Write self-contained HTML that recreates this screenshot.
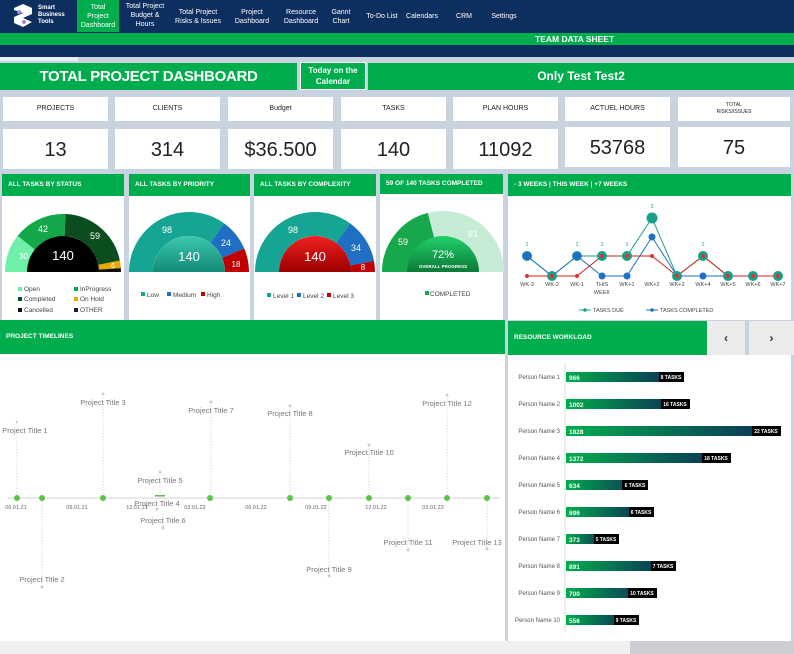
<!DOCTYPE html>
<html><head><meta charset="utf-8">
<style>
*{margin:0;padding:0;box-sizing:border-box}
body{width:794px;height:654px;overflow:hidden;background:#c9d3df;font-family:"Liberation Sans",sans-serif;position:relative}
.a{position:absolute}
.nav{left:0;top:0;width:794px;height:33px;background:#0d2f5f}
.ni{position:absolute;top:3px;color:#fff;font-size:7px;line-height:9px;text-align:center}
.g{background:#00ad4d}
.hdr{color:#fff;font-size:6.5px;font-weight:bold;padding-left:6px;line-height:22px}
.kl{background:#fff;top:97px;height:24px;font-size:7px;text-align:center;line-height:24px;color:#222}
.kv{background:#fff;top:129px;height:40px;font-size:20px;text-align:center;line-height:42px;color:#222}
.wb{background:#fff}
</style></head><body>
<div class="a nav"></div>
<svg class="a" style="left:12px;top:4px" width="22" height="24" viewBox="0 0 22 24"><path d="M2 4 L11 0 L20 4 L20 10 L11 14 L20 18 L11 23 L2 19 L2 13 L11 9 L2 6Z" fill="#fff"/><circle cx="7" cy="8" r="2" fill="#a78bc8"/><circle cx="12" cy="18" r="2" fill="#a78bc8"/></svg>
<div class="ni" style="left:38px;top:5px;text-align:left;font-weight:bold;font-size:6px;line-height:7px">Smart<br>Business<br>Tools</div>
<div class="a g" style="left:77px;top:0;width:42px;height:32px"></div>
<div class="ni" style="left:77px;width:42px">Total<br>Project<br>Dashboard</div>
<div class="ni" style="left:122px;top:2px;width:46px">Total Project<br>Budget &amp;<br>Hours</div>
<div class="ni" style="left:174px;top:8px;width:48px">Total Project<br>Risks &amp; Issues</div>
<div class="ni" style="left:230px;top:8px;width:44px">Project<br>Dashboard</div>
<div class="ni" style="left:278px;top:8px;width:46px">Resource<br>Dashboard</div>
<div class="ni" style="left:327px;top:8px;width:28px">Gannt<br>Chart</div>
<div class="ni" style="left:362px;top:12px;width:40px">To-Do List</div>
<div class="ni" style="left:402px;top:12px;width:40px">Calendars</div>
<div class="ni" style="left:450px;top:12px;width:28px">CRM</div>
<div class="ni" style="left:486px;top:12px;width:36px">Settings</div>
<div class="a g" style="left:0;top:33px;width:794px;height:12px"></div>
<div class="a" style="left:535px;top:33px;color:#fff;font-weight:bold;font-size:8.5px;line-height:12px">TEAM DATA SHEET</div>
<div class="a" style="left:0;top:45px;width:794px;height:12px;background:#0d2f5f"></div>
<div class="a" style="left:0;top:57px;width:78px;height:4px;background:#e8edf2"></div>
<div class="a g" style="left:0;top:63px;width:297px;height:27px;color:#fff;font-size:15px;font-weight:bold;text-align:center;line-height:27px;letter-spacing:-0.3px">TOTAL PROJECT DASHBOARD</div>
<div class="a g" style="left:300px;top:62px;width:66px;height:28px;border:1.5px solid #fff;color:#fff;font-size:8px;font-weight:bold;text-align:center;line-height:11px;padding-top:2px">Today on the<br>Calendar</div>
<div class="a g" style="left:368px;top:63px;width:426px;height:27px;color:#fff;font-size:12px;font-weight:bold;text-align:center;line-height:27px">Only Test Test2</div>
<div class="a kl" style="left:3px;width:105px">PROJECTS</div>
<div class="a kl" style="left:115px;width:105px">CLIENTS</div>
<div class="a kl" style="left:228px;width:105px">Budget</div>
<div class="a kl" style="left:341px;width:105px">TASKS</div>
<div class="a kl" style="left:453px;width:105px">PLAN HOURS</div>
<div class="a kl" style="left:565px;width:105px">ACTUEL HOURS</div>
<div class="a kl" style="left:678px;width:112px;font-size:5px;line-height:7px;padding-top:5px">TOTAL<br>RISKS/ISSUES</div>
<div class="a kv" style="left:3px;width:105px">13</div>
<div class="a kv" style="left:115px;width:105px">314</div>
<div class="a kv" style="left:228px;width:105px">$36.500</div>
<div class="a kv" style="left:341px;width:105px">140</div>
<div class="a kv" style="left:453px;width:105px">11092</div>
<div class="a kv" style="left:565px;top:127px;width:105px">53768</div>
<div class="a kv" style="left:678px;top:127px;width:112px">75</div>

<div class="a wb" style="left:2px;top:174px;width:122px;height:146px"></div>
<div class="a wb" style="left:129px;top:174px;width:121px;height:146px"></div>
<div class="a wb" style="left:254px;top:174px;width:122px;height:146px"></div>
<div class="a wb" style="left:380px;top:174px;width:123px;height:146px"></div>
<div class="a wb" style="left:508px;top:174px;width:283px;height:146px"></div>
<div class="a g hdr" style="left:2px;top:174px;width:122px">ALL TASKS BY STATUS</div>
<div class="a g hdr" style="left:129px;top:174px;width:121px">ALL TASKS BY PRIORITY</div>
<div class="a g hdr" style="left:254px;top:174px;width:122px">ALL TASKS BY COMPLEXITY</div>
<div class="a g hdr" style="left:380px;top:174px;width:123px;line-height:20px">59 OF 140 TASKS COMPLETED</div>
<div class="a g hdr" style="left:508px;top:174px;width:283px">- 3 WEEKS | THIS WEEK | +7 WEEKS</div>

<div class="a g hdr" style="left:0;top:320px;width:505px;height:34px;line-height:34px">PROJECT TIMELINES</div>
<div class="a wb" style="left:0;top:354px;width:505px;height:287px"></div>
<div class="a g hdr" style="left:508px;top:321px;width:199px;height:34px;line-height:34px">RESOURCE WORKLOAD</div>
<div class="a" style="left:707px;top:321px;width:38px;height:34px;background:#ececec;text-align:center;line-height:34px;font-size:12px;font-weight:bold;color:#333">‹</div>
<div class="a" style="left:749px;top:321px;width:45px;height:34px;background:#ececec;text-align:center;line-height:34px;font-size:12px;font-weight:bold;color:#333">›</div>
<div class="a wb" style="left:508px;top:355px;width:283px;height:286px"></div>
<div class="a" style="left:0;top:641px;width:630px;height:13px;background:#f0f0f0"></div>
<div class="a" style="left:630px;top:641px;width:164px;height:13px;background:#d0ccd3"></div>

<svg class="a" style="left:0;top:0" width="794" height="654" font-family="Liberation Sans, sans-serif">
<defs>
<linearGradient id="bg" x1="0" x2="1"><stop offset="0" stop-color="#00ad4d"/><stop offset="1" stop-color="#0d3557"/></linearGradient>
<linearGradient id="tk" x1="0" y1="0" x2="0" y2="1"><stop offset="0" stop-color="#3cc8b0"/><stop offset="1" stop-color="#138a78"/></linearGradient>
<linearGradient id="rd" x1="0" y1="0" x2="0" y2="1"><stop offset="0" stop-color="#f02020"/><stop offset="1" stop-color="#9c0000"/></linearGradient>
<linearGradient id="gn" x1="0" y1="0" x2="0" y2="1"><stop offset="0" stop-color="#22d06a"/><stop offset="1" stop-color="#0a7a38"/></linearGradient>
</defs>
<g transform="rotate(180 63 272)" fill="none" stroke-width="22">
<circle cx="63" cy="272" r="47" pathLength="100" stroke="#6ef0a8" stroke-dasharray="10.7 100"/>
<circle cx="63" cy="272" r="47" pathLength="100" stroke="#14a84a" stroke-dasharray="15 100" stroke-dashoffset="-10.7"/>
<circle cx="63" cy="272" r="47" pathLength="100" stroke="#0b4d1e" stroke-dasharray="21.1 100" stroke-dashoffset="-25.7"/>
<circle cx="63" cy="272" r="47" pathLength="100" stroke="#e8a800" stroke-dasharray="2.1 100" stroke-dashoffset="-46.8"/>
<circle cx="63" cy="272" r="47" pathLength="100" stroke="#111" stroke-dasharray="1.1 100" stroke-dashoffset="-48.9"/>
</g>
<path d="M27 272 A36 36 0 0 1 99 272Z" fill="#000"/>
<rect x="2" y="272" width="122" height="48" fill="#fff"/>
<text x="63" y="260" font-size="13" fill="#fff" text-anchor="middle">140</text>
<text x="19" y="259" font-size="8" fill="#fff">30</text>
<text x="43" y="232" font-size="9" fill="#fff" text-anchor="middle">42</text>
<text x="95" y="239" font-size="9" fill="#fff" text-anchor="middle">59</text>
<text x="111" y="268" font-size="7" fill="#fff">6</text>
<g font-size="6.5" fill="#444">
<rect x="18" y="287" width="4" height="4" fill="#6ef0a8"/><text x="24" y="291">Open</text>
<rect x="74" y="287" width="4" height="4" fill="#14a84a"/><text x="80" y="291">InProgress</text>
<rect x="18" y="297" width="4" height="4" fill="#0b4d1e"/><text x="24" y="301">Completed</text>
<rect x="74" y="297" width="4" height="4" fill="#e8a800"/><text x="80" y="301">On Hold</text>
<rect x="18" y="308" width="4" height="4" fill="#111"/><text x="24" y="312">Cancelled</text>
<rect x="74" y="308" width="4" height="4" fill="#1a1a4a"/><text x="80" y="312">OTHER</text>
</g>
<g transform="rotate(180 189 272)" fill="none" stroke-width="24">
<circle cx="189" cy="272" r="48" pathLength="100" stroke="#17a593" stroke-dasharray="35 100"/>
<circle cx="189" cy="272" r="48" pathLength="100" stroke="#1f6fc5" stroke-dasharray="8.6 100" stroke-dashoffset="-35"/>
<circle cx="189" cy="272" r="48" pathLength="100" stroke="#c00000" stroke-dasharray="6.4 100" stroke-dashoffset="-43.6"/>
</g>
<path d="M153 272 A36 36 0 0 1 225 272Z" fill="url(#tk)"/>
<rect x="129" y="272" width="121" height="48" fill="#fff"/>
<text x="189" y="261" font-size="13" fill="#fff" text-anchor="middle">140</text>
<text x="167" y="233" font-size="9" fill="#fff" text-anchor="middle">98</text>
<text x="226" y="246" font-size="9" fill="#fff" text-anchor="middle">24</text>
<text x="236" y="267" font-size="8" fill="#fff" text-anchor="middle">18</text>
<g font-size="6.5" fill="#444">
<rect x="141" y="292" width="4" height="4" fill="#17a593"/><text x="147" y="297">Low</text>
<rect x="167" y="292" width="4" height="4" fill="#1f6fc5"/><text x="173" y="297">Medium</text>
<rect x="201" y="292" width="4" height="4" fill="#c00000"/><text x="207" y="297">High</text>
</g>
<g transform="rotate(180 315 272)" fill="none" stroke-width="24">
<circle cx="315" cy="272" r="48" pathLength="100" stroke="#17a593" stroke-dasharray="35 100"/>
<circle cx="315" cy="272" r="48" pathLength="100" stroke="#1f6fc5" stroke-dasharray="12.1 100" stroke-dashoffset="-35"/>
<circle cx="315" cy="272" r="48" pathLength="100" stroke="#c00000" stroke-dasharray="2.9 100" stroke-dashoffset="-47.1"/>
</g>
<path d="M279 272 A36 36 0 0 1 351 272Z" fill="url(#rd)"/>
<rect x="254" y="272" width="122" height="48" fill="#fff"/>
<text x="315" y="261" font-size="13" fill="#fff" text-anchor="middle">140</text>
<text x="293" y="233" font-size="9" fill="#fff" text-anchor="middle">98</text>
<text x="356" y="251" font-size="9" fill="#fff" text-anchor="middle">34</text>
<text x="363" y="270" font-size="8" fill="#fff" text-anchor="middle">8</text>
<g font-size="6.5" fill="#444">
<rect x="267" y="293" width="4" height="4" fill="#17a593"/><text x="273" y="298">Level 1</text>
<rect x="297" y="293" width="4" height="4" fill="#1f6fc5"/><text x="303" y="298">Level 2</text>
<rect x="327" y="293" width="4" height="4" fill="#c00000"/><text x="333" y="298">Level 3</text>
</g>
<g transform="rotate(180 443 272)" fill="none" stroke-width="26">
<circle cx="443" cy="272" r="48" pathLength="100" stroke="#16a84a" stroke-dasharray="21 100"/>
<circle cx="443" cy="272" r="48" pathLength="100" stroke="#c6ecd6" stroke-dasharray="29 100" stroke-dashoffset="-21"/>
</g>
<path d="M407 272 A36 36 0 0 1 479 272Z" fill="url(#gn)"/>
<rect x="380" y="272" width="123" height="48" fill="#fff"/>
<text x="443" y="258" font-size="11" fill="#fff" text-anchor="middle">72%</text>
<text x="443" y="268" font-size="4.5" font-weight="bold" fill="#fff" text-anchor="middle">OVERALL PROGRESS</text>
<text x="403" y="245" font-size="9" fill="#fff" text-anchor="middle">59</text>
<text x="473" y="237" font-size="9" fill="#fff" text-anchor="middle">81</text>
<rect x="425" y="291" width="4" height="4" fill="#16a84a"/><text x="430" y="296" font-size="6.5" fill="#444">COMPLETED</text>
<g fill="none" stroke-width="1">
<polyline points="527,256 552,276 577,256 602,256 627,256 652,218 677,276 703,256 728,276 753,276 778,276" stroke="#1aa08a"/>
<polyline points="527,256 552,276 577,256 602,276 627,276 652,237 677,276 703,276 728,276 753,276 778,276" stroke="#1f6fc5"/>
<polyline points="527,276 552,276 577,276 602,256 627,256 652,256 677,276 703,256 728,276 753,276 778,276" stroke="#d02020"/>
</g>
<g fill="#1aa08a"><circle cx="527" cy="256" r="5"/><circle cx="552" cy="276" r="5"/><circle cx="577" cy="256" r="5"/><circle cx="602" cy="256" r="5"/><circle cx="627" cy="256" r="5"/><circle cx="652" cy="218" r="5.5"/><circle cx="677" cy="276" r="5"/><circle cx="703" cy="256" r="5"/><circle cx="728" cy="276" r="5"/><circle cx="753" cy="276" r="5"/><circle cx="778" cy="276" r="5"/></g>
<g fill="#1f6fc5"><circle cx="527" cy="256" r="4.5"/><circle cx="577" cy="256" r="4"/><circle cx="602" cy="276" r="3.5"/><circle cx="627" cy="276" r="3.5"/><circle cx="652" cy="237" r="3.5"/><circle cx="703" cy="276" r="3.5"/></g>
<g fill="#e03030"><circle cx="527" cy="276" r="2"/><circle cx="552" cy="276" r="2"/><circle cx="577" cy="276" r="2"/><circle cx="602" cy="256" r="2"/><circle cx="627" cy="256" r="2"/><circle cx="652" cy="256" r="2"/><circle cx="677" cy="276" r="2"/><circle cx="703" cy="256" r="2"/><circle cx="728" cy="276" r="2"/><circle cx="753" cy="276" r="2"/><circle cx="778" cy="276" r="2"/></g>
<g font-size="5.5" fill="#1aa08a" text-anchor="middle"><text x="527" y="246">1</text><text x="577" y="246">1</text><text x="602" y="246">1</text><text x="627" y="246">1</text><text x="652" y="208">3</text><text x="703" y="246">1</text></g>
<g font-size="5.5" fill="#444" text-anchor="middle"><text x="527" y="286">WK-3</text><text x="552" y="286">WK-2</text><text x="577" y="286">WK-1</text><text x="602" y="286">THIS</text><text x="602" y="294">WEEK</text><text x="627" y="286">WK+1</text><text x="652" y="286">WK+2</text><text x="677" y="286">WK+3</text><text x="703" y="286">WK+4</text><text x="728" y="286">WK+5</text><text x="753" y="286">WK+6</text><text x="778" y="286">WK+7</text></g>
<line x1="579" y1="310" x2="591" y2="310" stroke="#1aa08a"/><circle cx="585" cy="310" r="1.8" fill="#1aa08a"/><text x="593" y="312" font-size="5.5" fill="#444">TASKS DUE</text>
<line x1="646" y1="310" x2="658" y2="310" stroke="#1f6fc5"/><circle cx="652" cy="310" r="1.8" fill="#1f6fc5"/><text x="660" y="312" font-size="5.5" fill="#444">TASKS COMPLETED</text>
<line x1="8" y1="498" x2="500" y2="498" stroke="#e2e2e2" stroke-width="1.5"/>
<g stroke="#ccc" stroke-dasharray="1.5 1.5" stroke-width="0.7">
<line x1="17" y1="422" x2="17" y2="498"/><line x1="42" y1="498" x2="42" y2="587"/><line x1="103" y1="394" x2="103" y2="498"/><line x1="160" y1="472" x2="160" y2="498"/><line x1="163" y1="498" x2="163" y2="528"/><line x1="211" y1="402" x2="211" y2="498"/><line x1="290" y1="406" x2="290" y2="498"/><line x1="329" y1="498" x2="329" y2="576"/><line x1="369" y1="445" x2="369" y2="498"/><line x1="408" y1="498" x2="408" y2="550"/><line x1="447" y1="395" x2="447" y2="498"/><line x1="487" y1="498" x2="487" y2="549"/>
</g>
<g fill="#ccc"><circle cx="17" cy="422" r="1.2"/><circle cx="42" cy="587" r="1.5"/><circle cx="103" cy="394" r="1.5"/><circle cx="160" cy="472" r="1.5"/><circle cx="157" cy="509" r="1.5"/><circle cx="163" cy="528" r="1.5"/><circle cx="211" cy="402" r="1.5"/><circle cx="290" cy="406" r="1.5"/><circle cx="329" cy="576" r="1.5"/><circle cx="369" cy="445" r="1.5"/><circle cx="408" cy="550" r="1.5"/><circle cx="447" cy="395" r="1.5"/><circle cx="487" cy="549" r="1.5"/></g>
<g fill="#5cc24a"><circle cx="17" cy="498" r="3"/><circle cx="42" cy="498" r="3"/><circle cx="103" cy="498" r="3"/><circle cx="210" cy="498" r="3"/><circle cx="290" cy="498" r="3"/><circle cx="329" cy="498" r="3"/><circle cx="369" cy="498" r="3"/><circle cx="408" cy="498" r="3"/><circle cx="447" cy="498" r="3"/><circle cx="487" cy="498" r="3"/><rect x="155" y="495" width="10" height="1.5"/></g>
<g font-size="5.5" fill="#666" text-anchor="middle"><text x="16" y="509">06.01.21</text><text x="77" y="509">09.01.21</text><text x="137" y="509">12.01.21</text><text x="195" y="509">03.01.22</text><text x="256" y="509">06.01.22</text><text x="316" y="509">09.01.22</text><text x="376" y="509">12.01.22</text><text x="433" y="509">03.01.23</text></g>
<g font-size="7.5" fill="#777" text-anchor="middle"><text x="25" y="433">Project Title 1</text><text x="42" y="582">Project Title 2</text><text x="103" y="405">Project Title 3</text><text x="157" y="506">Project Title 4</text><text x="160" y="483">Project Title 5</text><text x="163" y="523">Project Title 6</text><text x="211" y="413">Project Title 7</text><text x="290" y="416">Project Title 8</text><text x="329" y="572">Project Title 9</text><text x="369" y="455">Project Title 10</text><text x="408" y="545">Project Title 11</text><text x="447" y="406">Project Title 12</text><text x="477" y="545">Project Title 13</text></g>
<line x1="565" y1="363" x2="565" y2="632" stroke="#ccc" stroke-width="0.7"/>
<g font-size="6" fill="#555" text-anchor="end"><text x="560" y="379">Person Name 1</text><text x="560" y="406">Person Name 2</text><text x="560" y="433">Person Name 3</text><text x="560" y="460">Person Name 4</text><text x="560" y="487">Person Name 5</text><text x="560" y="514">Person Name 6</text><text x="560" y="541">Person Name 7</text><text x="560" y="568">Person Name 8</text><text x="560" y="595">Person Name 9</text><text x="560" y="622">Person Name 10</text></g>
<g fill="url(#bg)"><rect x="566" y="372" width="101" height="10"/><rect x="566" y="399" width="107" height="10"/><rect x="566" y="426" width="201" height="10"/><rect x="566" y="453" width="150" height="10"/><rect x="566" y="480" width="74" height="10"/><rect x="566" y="507" width="72" height="10"/><rect x="566" y="534" width="36" height="10"/><rect x="566" y="561" width="96" height="10"/><rect x="566" y="588" width="75" height="10"/><rect x="566" y="615" width="58" height="10"/></g>
<g fill="#000"><rect x="659" y="372" width="25" height="10"/><rect x="661" y="399" width="29" height="10"/><rect x="752" y="426" width="29" height="10"/><rect x="702" y="453" width="29" height="10"/><rect x="622" y="480" width="26" height="10"/><rect x="629" y="507" width="25" height="10"/><rect x="594" y="534" width="25" height="10"/><rect x="651" y="561" width="25" height="10"/><rect x="628" y="588" width="29" height="10"/><rect x="614" y="615" width="25" height="10"/></g>
<g font-size="6.5" font-weight="bold" fill="#fff"><text x="569" y="380">966</text><text x="569" y="407">1002</text><text x="569" y="434">1828</text><text x="569" y="461">1372</text><text x="569" y="488">634</text><text x="569" y="515">696</text><text x="569" y="542">373</text><text x="569" y="569">891</text><text x="569" y="596">700</text><text x="569" y="623">556</text></g>
<g font-size="5" font-weight="bold" fill="#fff" text-anchor="middle"><text x="671" y="379">8 TASKS</text><text x="675" y="406">16 TASKS</text><text x="766" y="433">22 TASKS</text><text x="716" y="460">18 TASKS</text><text x="635" y="487">6 TASKS</text><text x="641" y="514">6 TASKS</text><text x="606" y="541">5 TASKS</text><text x="663" y="568">7 TASKS</text><text x="642" y="595">10 TASKS</text><text x="626" y="622">9 TASKS</text></g>
</svg>
</body></html>
